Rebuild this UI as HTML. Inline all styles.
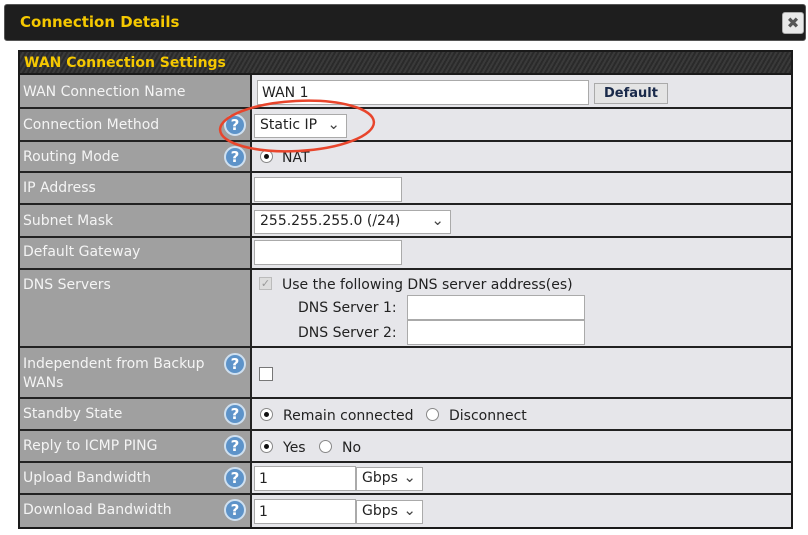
<!DOCTYPE html>
<html><head><meta charset="utf-8"><style>
*{box-sizing:border-box;margin:0;padding:0}
body{width:808px;height:535px;background:#fff;position:relative;overflow:hidden;font-family:"DejaVu Sans","Liberation Sans",sans-serif;font-size:13px;color:#111}
.abs{position:absolute}
.title{left:4px;top:4px;width:802px;height:37px;background:#1e1e1e;border-radius:3px;border:1px solid #555}
.title span{position:absolute;left:15px;top:8px;color:#f5c800;font-weight:bold;font-size:15px}
.close{left:782px;top:12px;width:22px;height:22px;background:#e8e8e8;border-radius:3px;border:1px solid #aaa;color:#555;font-weight:bold;font-size:15px;text-align:center;line-height:20px}
.tbl{left:18px;top:50px;width:775px;height:479px;background:#e6e6ea;border:2px solid #1a1a1a}
.hdr{left:18px;top:50px;width:775px;height:25px;background:repeating-linear-gradient(120deg,#2a2a2a 0 2px,#3a3a3a 2px 4px);border:2px solid #1a1a1a}
.hdr span{position:absolute;left:4px;top:3px;color:#f5c800;font-weight:bold;font-size:14px}
.lab{left:20px;width:230px;background:#a0a0a0}
.row{left:20px;width:771px;height:2px;background:#222}
.vl{left:250px;top:75px;width:2px;height:452px;background:#222}
.lt{left:23px;color:#f4f4f4;font-size:14px;line-height:19px}
.q{width:22px;height:22px;border-radius:50%;background:#5d93c9;border:2px solid #cfe0f0;color:#fff;font-weight:bold;font-size:15px;text-align:center;line-height:18px;left:224px}
.in{background:#fff;border:1px solid #aaa;height:25px}
.sel{background:#fff;border:1px solid #aaa;height:24px;padding:2px 5px;font-size:13px}
.sel i{position:absolute;right:6px;top:0px;font-style:normal;font-size:15px;color:#444}
.rad{width:13px;height:13px;border-radius:50%;border:1px solid #888;background:#fff}
.rad.on::after{content:"";position:absolute;left:3px;top:3px;width:5px;height:5px;border-radius:50%;background:#111}
.t{font-size:14px;color:#222}
</style></head><body>
<div class="abs title"><span>Connection Details</span></div>
<div class="abs close">✖</div>
<div class="abs tbl"></div>
<div class="abs lab" style="top:75px;height:452px"></div>
<div class="abs hdr"><span>WAN Connection Settings</span></div>
<div class="abs vl"></div>
<div class="abs row" style="top:107px"></div>
<div class="abs row" style="top:140px"></div>
<div class="abs row" style="top:171px"></div>
<div class="abs row" style="top:203px"></div>
<div class="abs row" style="top:236px"></div>
<div class="abs row" style="top:268px"></div>
<div class="abs row" style="top:346px"></div>
<div class="abs row" style="top:397px"></div>
<div class="abs row" style="top:429px"></div>
<div class="abs row" style="top:461px"></div>
<div class="abs row" style="top:493px"></div>

<div class="abs lt" style="top:83px">WAN Connection Name</div>
<div class="abs lt" style="top:116px">Connection Method</div>
<div class="abs lt" style="top:148px">Routing Mode</div>
<div class="abs lt" style="top:179px">IP Address</div>
<div class="abs lt" style="top:212px">Subnet Mask</div>
<div class="abs lt" style="top:243px">Default Gateway</div>
<div class="abs lt" style="top:276px">DNS Servers</div>
<div class="abs lt" style="top:355px">Independent from Backup<br>WANs</div>
<div class="abs lt" style="top:405px">Standby State</div>
<div class="abs lt" style="top:437px">Reply to ICMP PING</div>
<div class="abs lt" style="top:469px">Upload Bandwidth</div>
<div class="abs lt" style="top:501px">Download Bandwidth</div>

<div class="abs q" style="top:114px">?</div>
<div class="abs q" style="top:146px">?</div>
<div class="abs q" style="top:353px">?</div>
<div class="abs q" style="top:403px">?</div>
<div class="abs q" style="top:435px">?</div>
<div class="abs q" style="top:467px">?</div>
<div class="abs q" style="top:499px">?</div>

<div class="abs in" style="left:257px;top:80px;width:332px"><span class="abs t" style="left:4px;top:4px">WAN 1</span></div>
<div class="abs" style="left:594px;top:83px;width:74px;height:21px;background:#e4e4e4;border:1px solid #aaa;font-weight:bold;color:#1a2a4a;font-size:13px;text-align:center;line-height:19px">Default</div>

<div class="abs sel" style="left:254px;top:114px;width:93px"><span class="t">Static IP</span><i>⌄</i></div>
<div class="abs rad on" style="left:260px;top:150px"></div>
<span class="abs t" style="left:282px;top:150px">NAT</span>
<div class="abs in" style="left:254px;top:177px;width:148px"></div>
<div class="abs sel" style="left:254px;top:210px;width:197px"><span class="t">255.255.255.0 (/24)</span><i>⌄</i></div>
<div class="abs in" style="left:254px;top:240px;width:148px"></div>

<div class="abs" style="left:259px;top:277px;width:13px;height:13px;border:1px solid #bbb;background:#ddd;color:#999;font-size:11px;line-height:11px;text-align:center">✓</div>
<span class="abs t" style="left:282px;top:277px">Use the following DNS server address(es)</span>
<span class="abs t" style="left:298px;top:300px">DNS Server 1:</span>
<span class="abs t" style="left:298px;top:325px">DNS Server 2:</span>
<div class="abs in" style="left:407px;top:295px;width:178px"></div>
<div class="abs in" style="left:407px;top:320px;width:178px"></div>

<div class="abs" style="left:259px;top:367px;width:14px;height:14px;border:1px solid #777;background:#fff"></div>

<div class="abs rad on" style="left:260px;top:408px"></div>
<span class="abs t" style="left:283px;top:408px">Remain connected</span>
<div class="abs rad" style="left:426px;top:408px"></div>
<span class="abs t" style="left:449px;top:408px">Disconnect</span>

<div class="abs rad on" style="left:260px;top:440px"></div>
<span class="abs t" style="left:283px;top:440px">Yes</span>
<div class="abs rad" style="left:319px;top:440px"></div>
<span class="abs t" style="left:342px;top:440px">No</span>

<div class="abs in" style="left:254px;top:466px;width:102px"><span class="abs t" style="left:4px;top:4px">1</span></div>
<div class="abs sel" style="left:356px;top:467px;width:67px"><span class="t">Gbps</span><i>⌄</i></div>
<div class="abs in" style="left:254px;top:499px;width:102px"><span class="abs t" style="left:4px;top:4px">1</span></div>
<div class="abs sel" style="left:356px;top:500px;width:67px"><span class="t">Gbps</span><i>⌄</i></div>

<svg class="abs" style="left:0;top:0" width="808" height="535">
<ellipse cx="297" cy="126" rx="77" ry="25" transform="rotate(-3 297 126)" fill="none" stroke="#e8452c" stroke-width="2.5"/>
</svg>
</body></html>
